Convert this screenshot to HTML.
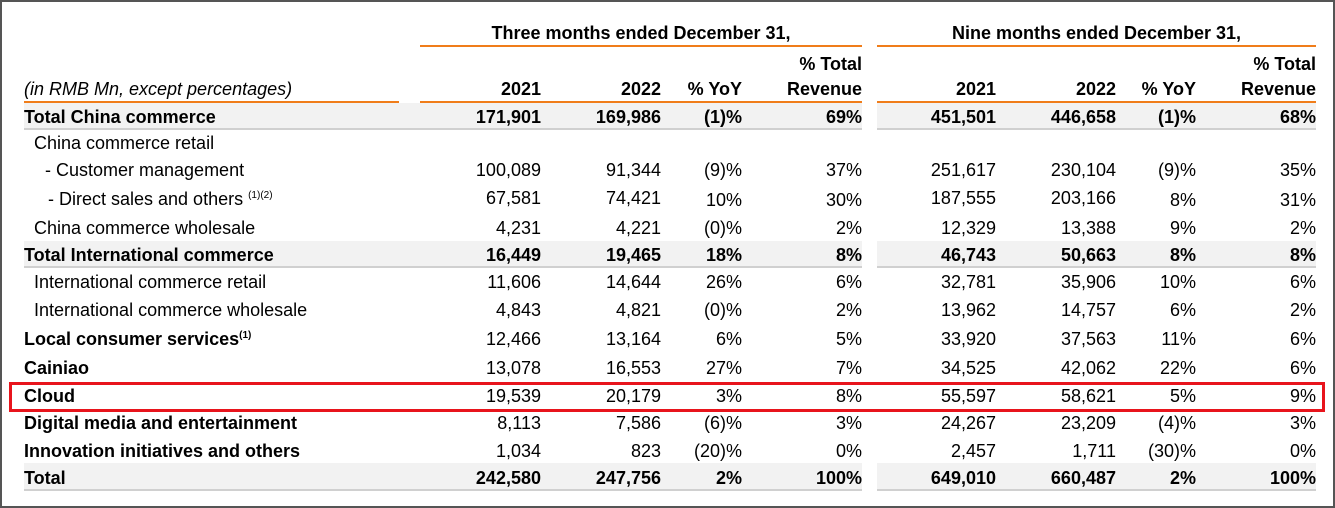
<!DOCTYPE html>
<html><head><meta charset="utf-8"><style>
body{margin:0;width:1335px;height:508px;position:relative;background:#fff;font-family:"Liberation Sans",sans-serif;font-size:18px;color:#000;overflow:hidden}
.frame{position:absolute;left:0;top:0;width:1331px;height:504px;border:2px solid #555}
.r{position:absolute;left:0;width:1335px;height:28px;line-height:28px}
.r span{position:absolute;white-space:nowrap}
.b{font-weight:bold}
.g1{position:absolute;left:24px;width:838px;background:#f2f2f2;border-bottom:2px solid #d0d0d0}
.g2{position:absolute;left:877px;width:439px;background:#f2f2f2;border-bottom:2px solid #d0d0d0}
.o{position:absolute;height:2px;background:#f07d1a}
sup{font-size:10px;vertical-align:7px;line-height:0}
</style></head><body>
<div class="frame"></div>
<div class="o" style="left:420px;width:442px;top:45px"></div>
<div class="o" style="left:877px;width:439px;top:45px"></div>
<div class="o" style="left:24px;width:375px;top:101px"></div>
<div class="o" style="left:420px;width:442px;top:101px"></div>
<div class="o" style="left:877px;width:439px;top:101px"></div>
<div class="g1" style="top:103px;height:25px"></div><div class="g2" style="top:103px;height:25px"></div>
<div class="g1" style="top:241px;height:25px"></div><div class="g2" style="top:241px;height:25px"></div>
<div class="g1" style="top:463px;height:26px"></div><div class="g2" style="top:463px;height:26px"></div>
<div style="position:absolute;left:9px;top:382px;width:1310px;height:24px;border:3px solid #e8141c"></div>

<div class="r b" style="top:19px"><span style="left:420px;width:442px;text-align:center">Three months ended December 31,</span><span style="left:877px;width:439px;text-align:center">Nine months ended December 31,</span></div>
<div class="r b" style="top:50px"><span style="right:473px">% Total</span><span style="right:19px">% Total</span></div>
<div class="r b" style="top:75px"><span style="left:24px;font-style:italic;font-weight:normal">(in RMB Mn, except percentages)</span><span style="right:794px">2021</span><span style="right:674px">2022</span><span style="right:593px">% YoY</span><span style="right:473px">Revenue</span><span style="right:339px">2021</span><span style="right:219px">2022</span><span style="right:139px">% YoY</span><span style="right:19px">Revenue</span></div>

<div class="r b" style="top:103px"><span style="left:24px">Total China commerce</span><span style="right:794px">171,901</span><span style="right:674px">169,986</span><span style="right:593px">(1)%</span><span style="right:473px">69%</span><span style="right:339px">451,501</span><span style="right:219px">446,658</span><span style="right:139px">(1)%</span><span style="right:19px">68%</span></div>
<div class="r" style="top:129px"><span style="left:34px">China commerce retail</span></div>
<div class="r" style="top:156px"><span style="left:45px">- Customer management</span><span style="right:794px">100,089</span><span style="right:674px">91,344</span><span style="right:593px">(9)%</span><span style="right:473px">37%</span><span style="right:339px">251,617</span><span style="right:219px">230,104</span><span style="right:139px">(9)%</span><span style="right:19px">35%</span></div>
<div class="r" style="top:185px"><span style="left:48px">- Direct sales and others <sup>(1)(2)</sup></span><span style="right:794px;top:-1px">67,581</span><span style="right:674px;top:-1px">74,421</span><span style="right:593px;top:1px">10%</span><span style="right:473px;top:1px">30%</span><span style="right:339px;top:-1px">187,555</span><span style="right:219px;top:-1px">203,166</span><span style="right:139px;top:1px">8%</span><span style="right:19px;top:1px">31%</span></div>
<div class="r" style="top:214px"><span style="left:34px">China commerce wholesale</span><span style="right:794px">4,231</span><span style="right:674px">4,221</span><span style="right:593px">(0)%</span><span style="right:473px">2%</span><span style="right:339px">12,329</span><span style="right:219px">13,388</span><span style="right:139px">9%</span><span style="right:19px">2%</span></div>
<div class="r b" style="top:241px"><span style="left:24px">Total International commerce</span><span style="right:794px">16,449</span><span style="right:674px">19,465</span><span style="right:593px">18%</span><span style="right:473px">8%</span><span style="right:339px">46,743</span><span style="right:219px">50,663</span><span style="right:139px">8%</span><span style="right:19px">8%</span></div>
<div class="r" style="top:268px"><span style="left:34px">International commerce retail</span><span style="right:794px">11,606</span><span style="right:674px">14,644</span><span style="right:593px">26%</span><span style="right:473px">6%</span><span style="right:339px">32,781</span><span style="right:219px">35,906</span><span style="right:139px">10%</span><span style="right:19px">6%</span></div>
<div class="r" style="top:296px"><span style="left:34px">International commerce wholesale</span><span style="right:794px">4,843</span><span style="right:674px">4,821</span><span style="right:593px">(0)%</span><span style="right:473px">2%</span><span style="right:339px">13,962</span><span style="right:219px">14,757</span><span style="right:139px">6%</span><span style="right:19px">2%</span></div>
<div class="r" style="top:325px"><span class="b" style="left:24px">Local consumer services<sup>(1)</sup></span><span style="right:794px">12,466</span><span style="right:674px">13,164</span><span style="right:593px">6%</span><span style="right:473px">5%</span><span style="right:339px">33,920</span><span style="right:219px">37,563</span><span style="right:139px">11%</span><span style="right:19px">6%</span></div>
<div class="r" style="top:354px"><span class="b" style="left:24px">Cainiao</span><span style="right:794px">13,078</span><span style="right:674px">16,553</span><span style="right:593px">27%</span><span style="right:473px">7%</span><span style="right:339px">34,525</span><span style="right:219px">42,062</span><span style="right:139px">22%</span><span style="right:19px">6%</span></div>
<div class="r" style="top:382px"><span class="b" style="left:24px">Cloud</span><span style="right:794px">19,539</span><span style="right:674px">20,179</span><span style="right:593px">3%</span><span style="right:473px">8%</span><span style="right:339px">55,597</span><span style="right:219px">58,621</span><span style="right:139px">5%</span><span style="right:19px">9%</span></div>
<div class="r" style="top:409px"><span class="b" style="left:24px">Digital media and entertainment</span><span style="right:794px">8,113</span><span style="right:674px">7,586</span><span style="right:593px">(6)%</span><span style="right:473px">3%</span><span style="right:339px">24,267</span><span style="right:219px">23,209</span><span style="right:139px">(4)%</span><span style="right:19px">3%</span></div>
<div class="r" style="top:437px"><span class="b" style="left:24px">Innovation initiatives and others</span><span style="right:794px">1,034</span><span style="right:674px">823</span><span style="right:593px">(20)%</span><span style="right:473px">0%</span><span style="right:339px">2,457</span><span style="right:219px">1,711</span><span style="right:139px">(30)%</span><span style="right:19px">0%</span></div>
<div class="r b" style="top:464px"><span style="left:24px">Total</span><span style="right:794px">242,580</span><span style="right:674px">247,756</span><span style="right:593px">2%</span><span style="right:473px">100%</span><span style="right:339px">649,010</span><span style="right:219px">660,487</span><span style="right:139px">2%</span><span style="right:19px">100%</span></div>
</body></html>
